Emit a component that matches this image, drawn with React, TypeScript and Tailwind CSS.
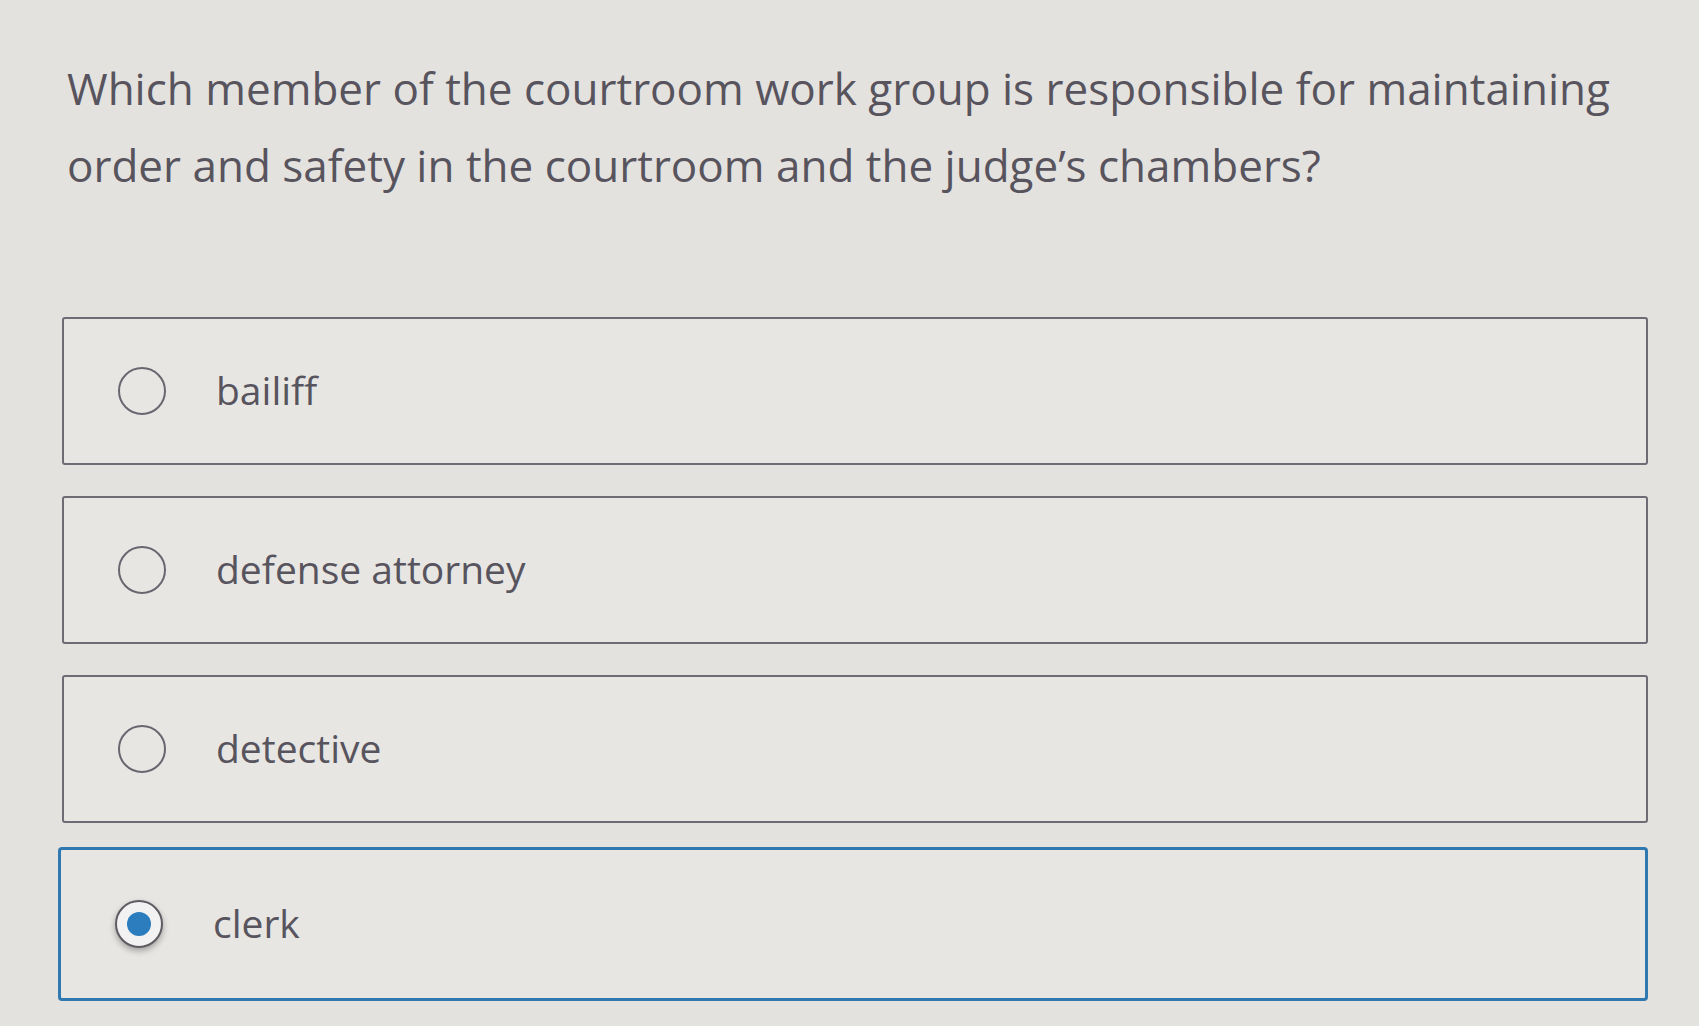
import React from "react";

const options = [
  { label: "bailiff", selected: false },
  { label: "defense attorney", selected: false },
  { label: "detective", selected: false },
  { label: "clerk", selected: true },
];

export default function App() {
  return (
    <div
      className="w-[1699px] h-[1026px] overflow-hidden bg-[#e4e2df] text-[#58545e]"
      style={{ fontFamily: '"Open Sans", "Noto Sans", sans-serif' }}
    >
      <div className="pl-[67px] pr-[40px] pt-[50px]">
        <p className="text-[44px] leading-[77px] whitespace-nowrap">
          Which member of the courtroom work group is responsible for maintaining
          <br />
          order and safety in the courtroom and the judge’s chambers?
        </p>
      </div>
      <div className="flex flex-col pl-[62px] pt-[113px] w-[1648px]">
        {options.map((o, i) => (
          <div
            key={o.label}
            className={
              o.selected
                ? "flex items-center h-[154px] mt-[24px] -ml-[4px] rounded-[4px] border-[3px] border-[#2f78b0] bg-[#e7e6e3] pl-[54px]"
                : i === 0
                ? "flex items-center h-[148px] rounded-[3px] border-2 border-[#6f6b74] bg-[#e7e6e3] pl-[54px]"
                : "flex items-center h-[148px] mt-[31px] rounded-[3px] border-2 border-[#6f6b74] bg-[#e7e6e3] pl-[54px]"
            }
          >
            {o.selected ? (
              <div className="w-[48px] h-[48px] rounded-full border-2 border-[#5f5b62] bg-[#f2f2f2] shadow-[0_3px_6px_rgba(0,0,0,0.3)] flex items-center justify-center">
                <div className="w-[24px] h-[24px] rounded-full bg-[#2b7dbd]" />
              </div>
            ) : (
              <div className="w-[48px] h-[48px] rounded-full border-2 border-[#6a6670]" />
            )}
            <span className="ml-[50px] text-[39px] leading-none pb-[4px]">{o.label}</span>
          </div>
        ))}
      </div>
    </div>
  );
}
